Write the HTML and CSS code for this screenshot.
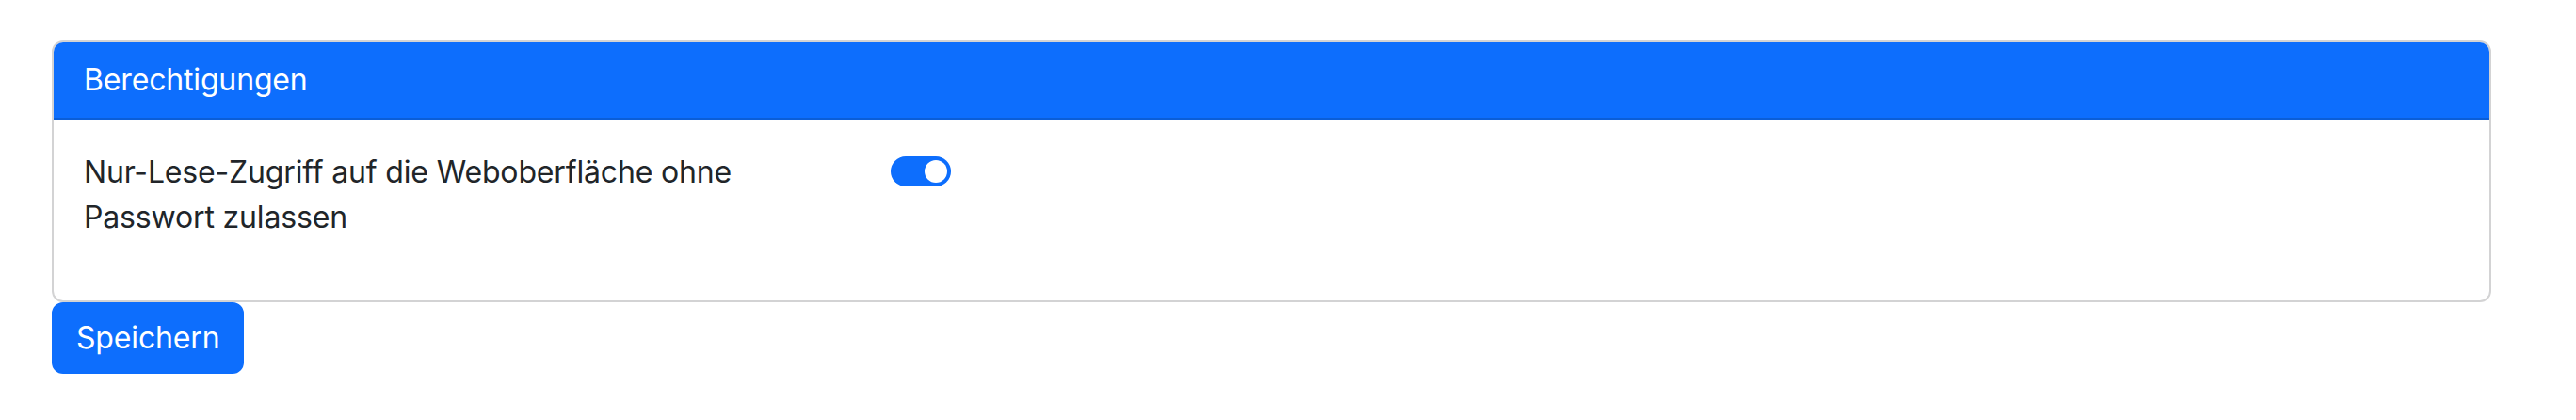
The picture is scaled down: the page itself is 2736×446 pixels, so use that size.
FILE: index.html
```html
<!DOCTYPE html>
<html lang="de">
<head>
<meta charset="utf-8">
<title>Berechtigungen</title>
<link rel="stylesheet" href="styles.css">
</head>
<body>
<form class="settings">
  <div class="card">
    <div class="card-header">Berechtigungen</div>
    <div class="card-body">
      <div class="row">
        <label class="col-label" for="ro">Nur-Lese-Zugriff auf die Weboberfläche ohne Passwort zulassen</label>
        <div class="col-control">
          <span class="switch" id="ro" role="switch" aria-checked="true"><span class="knob"></span></span>
        </div>
      </div>
    </div>
  </div>
  <button type="button" class="btn">Speichern</button>
</form>
</body>
</html>
```
FILE: styles.css
```css
html, body {
  margin: 0;
  background: #fff;
}
body {
  padding: 43px 90px 0 55px;
  font-family: Inter, "Noto Sans", "Liberation Sans", sans-serif;
  font-size: 32px;
  line-height: 48px;
  letter-spacing: -0.16px;
  color: #212529;
}
.settings {
  display: flex;
  flex-direction: column;
  align-items: flex-start;
}
.card {
  align-self: stretch;
  border: 2px solid #d3d3d4;
  border-radius: 12px;
  overflow: hidden;
}
.card-header {
  background: #0d6efd;
  color: #fff;
  padding: 16px 32px;
  border-bottom: 2px solid #0b5ed7;
}
.card-body {
  padding: 32px 32px;
}
.row {
  display: flex;
  margin: 0 -24px 32px;
}
.col-label {
  flex: 0 0 33.3333%;
  box-sizing: border-box;
  padding: 0 24px;
}
.col-control {
  flex: 0 0 66.6667%;
  box-sizing: border-box;
  padding: 7px 24px 0;
}
.switch {
  display: flex;
  justify-content: flex-end;
  align-items: center;
  width: 64px;
  height: 32px;
  box-sizing: border-box;
  padding: 0 4px;
  border-radius: 16px;
  background: #0d6efd;
}
.knob {
  width: 24px;
  height: 24px;
  border-radius: 50%;
  background: #fff;
}
.btn {
  font: inherit;
  letter-spacing: inherit;
  color: #fff;
  background: #0d6efd;
  border: 2px solid #0d6efd;
  border-radius: 12px;
  padding: 12px 24px;
  margin: 0;
}
```
